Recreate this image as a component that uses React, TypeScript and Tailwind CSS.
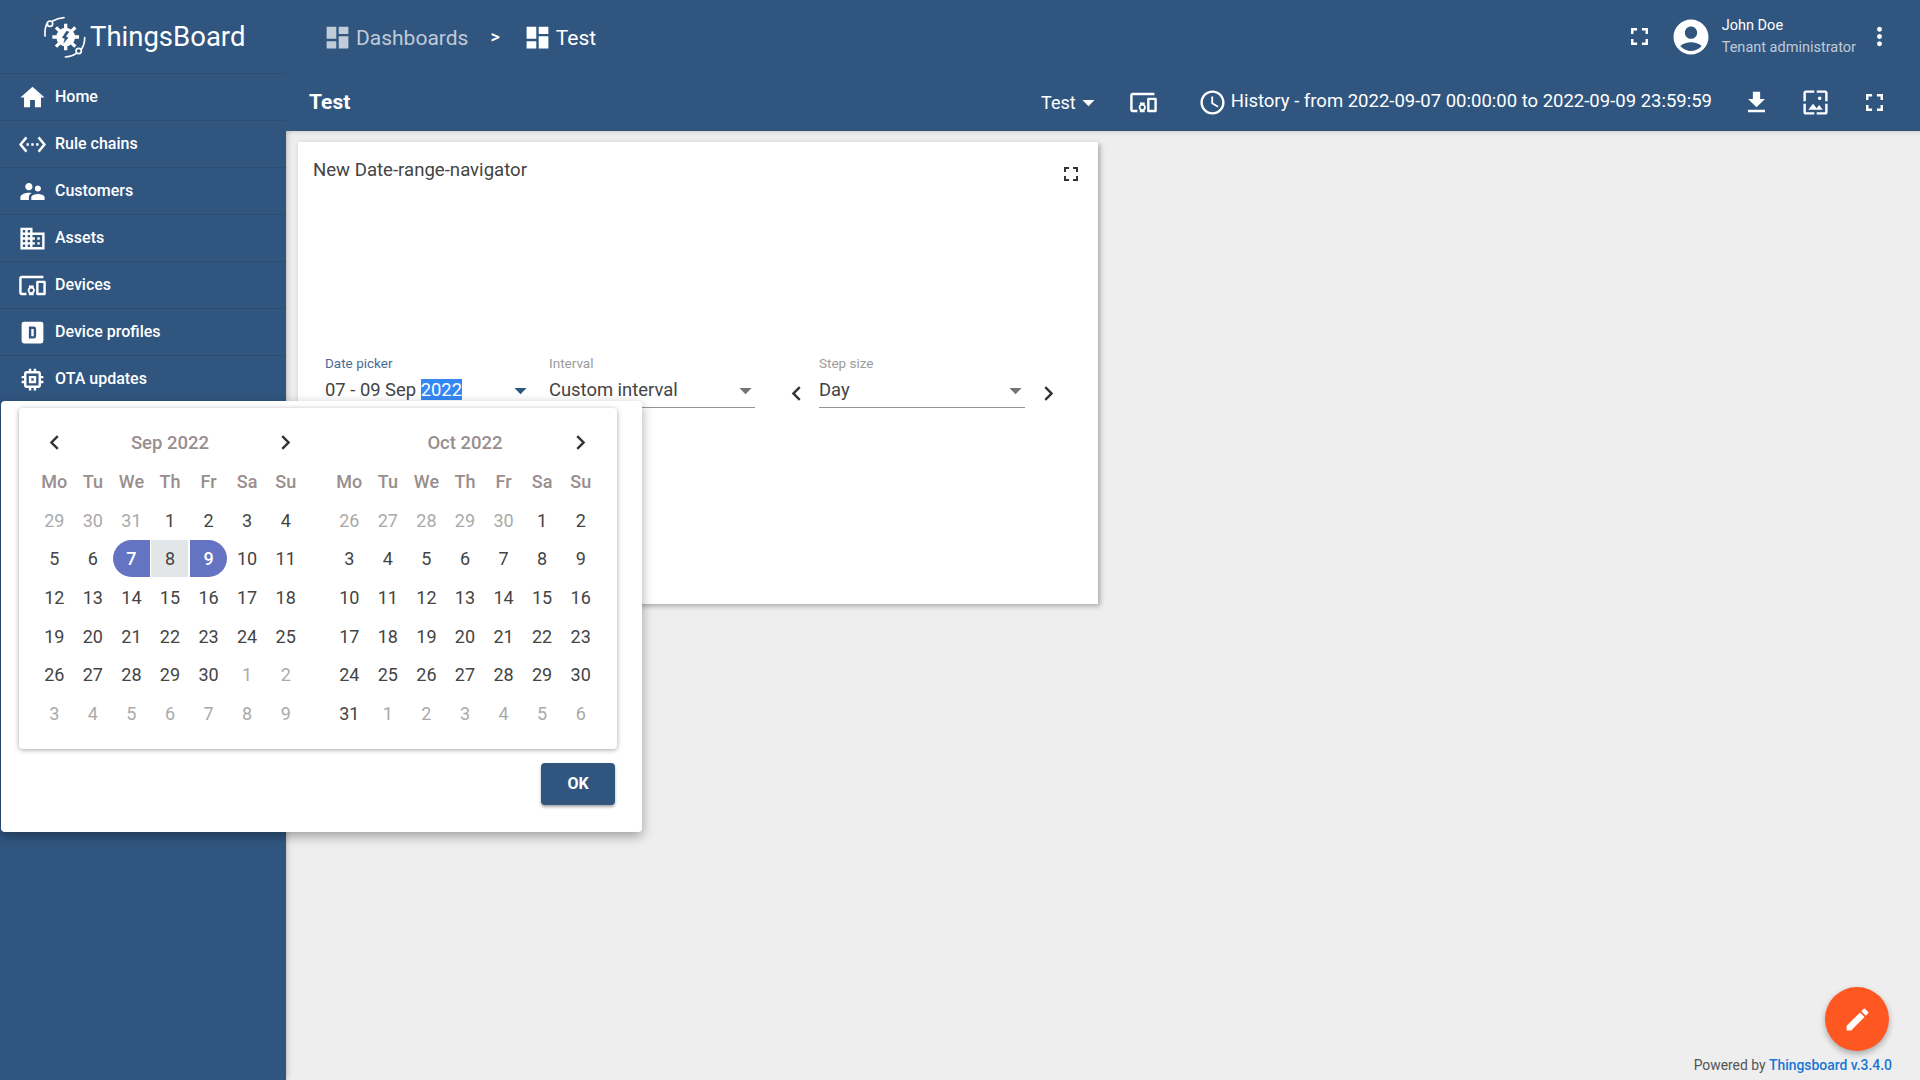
import React from 'react';
import {
  MdHome, MdSettingsEthernet, MdSupervisorAccount, MdDomain, MdDevicesOther, MdMemory, MdDashboard,
  MdFullscreen, MdAccountCircle, MdMoreVert, MdArrowDropDown, MdAccessTime, MdFileDownload, MdWallpaper,
  MdEdit, MdChevronLeft, MdChevronRight,
} from 'react-icons/md';

const DeviceProfileIcon = ({ size = 29 }: { size?: number }) => (
  <svg width={size} height={size} viewBox="0 0 24 24" fill="currentColor">
    <path fillRule="evenodd" d="M5 3h14a2 2 0 0 1 2 2v14a2 2 0 0 1-2 2H5a2 2 0 0 1-2-2V5a2 2 0 0 1 2-2zm4 4v10h4a2 2 0 0 0 2-2V9a2 2 0 0 0-2-2H9zm2 2h2v6h-2V9z" />
  </svg>
);

const Logo = () => (
  <svg width={50} height={48} viewBox="120 36 150 144" fill="none" stroke="white" className="shrink-0">
    <path d="M135 105 C134 90 136 76 142 66" strokeWidth="5" strokeLinecap="round" />
    <circle cx="150" cy="68" r="8" strokeWidth="5" />
    <path d="M158 60 C168 54 180 51 192 50" strokeWidth="5" strokeLinecap="round" />
    <path d="M254 110 C254 122 251 134 245 143" strokeWidth="5" strokeLinecap="round" />
    <circle cx="236" cy="150" r="8" strokeWidth="5" />
    <path d="M228 158 C218 165 206 168 196 168" strokeWidth="5" strokeLinecap="round" />
    <path strokeWidth="10" d="M197 68V148M157 108H237M168 79L226 137M226 79L168 137" />
    <circle cx="197" cy="108" r="28" fill="white" stroke="none" />
    <path d="M199 90 L208 92 L198 106 L205 110 L190 128 L194 113 L186 110 Z" fill="#305680" stroke="none" />
  </svg>
);

const menu = [
  { label: 'Home', icon: <MdHome size={29} /> },
  { label: 'Rule chains', icon: <MdSettingsEthernet size={29} /> },
  { label: 'Customers', icon: <MdSupervisorAccount size={29} /> },
  { label: 'Assets', icon: <MdDomain size={29} /> },
  { label: 'Devices', icon: <MdDevicesOther size={29} /> },
  { label: 'Device profiles', icon: <DeviceProfileIcon /> },
  { label: 'OTA updates', icon: <MdMemory size={29} /> },
];

const weekDays = ['Mo', 'Tu', 'We', 'Th', 'Fr', 'Sa', 'Su'];

type Day = { d: number; off?: boolean };

const seq = (from: number, to: number, off?: boolean): Day[] =>
  Array.from({ length: to - from + 1 }, (_, i) => ({ d: from + i, off }));

const sepDays = [...seq(29, 31, true), ...seq(1, 30), ...seq(1, 9, true)];
const octDays = [...seq(26, 30, true), ...seq(1, 31), ...seq(1, 6, true)];

const DayCell = ({ day, selected }: { day: Day; selected?: boolean }) => {
  let cls = day.off ? 'text-[#aaaaaa]' : 'text-[#444444]';
  if (selected && day.d === 7) cls = 'bg-[#6573c3] text-white font-medium rounded-l-full';
  if (selected && day.d === 8) cls = 'bg-[#e2e6e9] text-[#444444]';
  if (selected && day.d === 9) cls = 'bg-[#6573c3] text-white font-medium rounded-r-full';
  return (
    <div className="flex h-[38.7px] items-center justify-center">
      <span className={`flex h-[37px] w-[37px] items-center justify-center ${cls}`}>{day.d}</span>
    </div>
  );
};

const Month = ({ title, days, showPrev, hilite }: { title: string; days: Day[]; showPrev?: boolean; hilite?: boolean }) => (
  <div className="w-[270px]">
    <div className="grid h-[38.7px] grid-cols-7 items-center">
      <div className="flex justify-center text-[#333333]">{showPrev && <MdChevronLeft size={29} />}</div>
      <div className="col-span-5 pt-[3px] text-center text-[18.5px] font-medium text-[#998e8e]">{title}</div>
      <div className="flex justify-center text-[#333333]"><MdChevronRight size={29} /></div>
    </div>
    <div className="grid grid-cols-7">
      {weekDays.map((w) => (
        <div key={w} className="flex h-[38.7px] items-center justify-center font-medium text-[#998e8e]">{w}</div>
      ))}
      {days.map((day, i) => (
        <DayCell key={i} day={day} selected={hilite && !day.off && day.d >= 7 && day.d <= 9} />
      ))}
    </div>
  </div>
);

const Field = ({ label, value, className, labelClass, caretClass, noLine }: {
  label: string; value: React.ReactNode; className: string; labelClass?: string; caretClass?: string; noLine?: boolean;
}) => (
  <div className={className}>
    <div className={`h-[16px] text-[13.5px] leading-[16px] ${labelClass ?? 'text-[#9b9b9b]'}`}>{label}</div>
    <div className={`mt-[7px] flex h-[30px] items-start justify-between pb-[6px] ${noLine ? '' : 'border-b border-[#949494]'}`}>
      <span className="text-[18.4px] leading-[24px] text-[#444444]">{value}</span>
      <MdArrowDropDown size={29} className={`-mr-[5px] -mt-[2px] ${caretClass ?? 'text-[#757575]'}`} />
    </div>
  </div>
);

export default function App() {
  return (
    <div className="relative flex h-screen w-screen overflow-hidden bg-[#eeeeee] text-[18px] [font-family:Roboto,sans-serif]">
      <aside className="flex w-[286px] shrink-0 flex-col bg-[#305680] text-white shadow-[0_0_6px_rgba(0,0,0,0.3)]">
        <div className="flex h-[74px] items-center justify-start border-b border-[#2b4d73] pl-[40px]">
          <Logo />
          <span className="mt-[1px] text-[27.5px] leading-none">ThingsBoard</span>
        </div>
        {menu.map((m) => (
          <div key={m.label} className="flex h-[47px] items-center border-b border-[#2b4d73] pl-[18px]">
            <span className="flex w-[29px] justify-center">{m.icon}</span>
            <span className="ml-[8px] text-[16px] font-medium">{m.label}</span>
          </div>
        ))}
      </aside>

      <main className="flex min-w-0 flex-1 flex-col">
        <header className="bg-[#305680] text-white">
          <div className="flex h-[73px] items-center pl-[37px] pr-[26px]">
            <MdDashboard size={29} className="mt-[1px] text-white/70" />
            <span className="ml-[4px] mt-[4px] text-[21px] text-white/70">Dashboards</span>
            <span className="ml-[22px] mb-[1px] text-[18px] font-medium">&gt;</span>
            <MdDashboard size={29} className="ml-[23px] mt-[1px]" />
            <span className="ml-[4px] mt-[4px] text-[21px]">Test</span>
            <MdFullscreen size={29} className="ml-auto" />
            <MdAccountCircle size={42} className="ml-[16px]" />
            <div className="ml-[10px] mt-[1px] flex flex-col text-[14.5px] leading-[22px]">
              <span>John Doe</span>
              <span className="text-white/70">Tenant administrator</span>
            </div>
            <MdMoreVert size={29} className="ml-[9px]" />
          </div>
          <div className="flex h-[58px] items-center pl-[23px] pr-[31px]">
            <span className="mt-[1px] text-[21px] font-bold">Test</span>
            <span className="ml-auto text-[18px]">Test</span>
            <MdArrowDropDown size={29} className="-ml-[2px]" />
            <MdDevicesOther size={29} className="ml-[26px]" />
            <MdAccessTime size={29} className="ml-[40px]" />
            <span className="ml-[4px] text-[18.5px]">History - from 2022-09-07 00:00:00 to 2022-09-09 23:59:59</span>
            <MdFileDownload size={29} className="ml-[30px]" />
            <MdWallpaper size={29} className="ml-[30px]" />
            <MdFullscreen size={29} className="ml-[30px]" />
          </div>
        </header>

        <div className="flex min-h-0 flex-1 flex-col justify-between pl-[12px] pt-[11px] shadow-[inset_0_4px_4px_-3px_rgba(0,0,0,0.15)]">
          <section className="h-[462px] w-[800px] bg-white px-[15px] pt-[16px] shadow-[2px_2px_5px_rgba(0,0,0,0.3)]">
            <div className="flex items-start justify-between">
              <span className="text-[18.6px] leading-[24px] text-[#444444]">New Date-range-navigator</span>
              <MdFullscreen size={24} className="mr-0 mt-[4px] text-[#333333]" />
            </div>
            <div className="ml-[12px] mt-[169px] flex items-start">
              <Field
                label="Date picker"
                labelClass="text-[#4a6d93]"
                caretClass="text-[#305680]"
                className="w-[205px]"
                noLine
                value={<>07 - 09 Sep <span className="bg-[#3388f5] text-white">2022</span></>}
              />
              <Field label="Interval" value="Custom interval" className="ml-[19px] w-[206px]" />
              <div className="ml-[35px] mt-[24px] text-[#333333]"><MdChevronLeft size={29} className="-mx-[8px]" /></div>
              <Field label="Step size" value="Day" className="ml-[16px] w-[206px]" />
              <div className="ml-[17px] mt-[24px] text-[#333333]"><MdChevronRight size={29} className="-mx-[8px]" /></div>
            </div>
          </section>
          <footer className="pb-[6px] pr-[28px] text-right text-[13.9px] leading-[18px] text-[#555555]">
            Powered by <span className="font-medium text-[#1976d2]">Thingsboard v.3.4.0</span>
          </footer>
        </div>
      </main>

      <div className="absolute left-[1px] top-[401px] flex h-[431px] w-[641px] flex-col rounded-[4px] bg-white pl-[18px] pt-[7px] shadow-[0_4px_12px_rgba(0,0,0,0.35)]">
        <div className="flex h-[341px] w-[598px] gap-[25px] rounded-[4px] bg-white px-[16px] pt-[15.5px] shadow-[0_1px_5px_rgba(0,0,0,0.35)]">
          <Month title="Sep 2022" days={sepDays} showPrev hilite />
          <Month title="Oct 2022" days={octDays} />
        </div>
        <div className="mt-[14px] flex w-[596px] justify-end">
          <button className="h-[42px] w-[74px] rounded-[4px] bg-[#305680] text-[16px] font-bold text-white shadow-[0_2px_3px_rgba(0,0,0,0.35)]">OK</button>
        </div>
      </div>

      <button className="absolute left-[1825px] top-[987px] flex h-[64px] w-[64px] items-center justify-center rounded-full bg-[#ff5722] text-white shadow-[0_3px_6px_rgba(0,0,0,0.3)]">
        <MdEdit size={29} />
      </button>
    </div>
  );
}
